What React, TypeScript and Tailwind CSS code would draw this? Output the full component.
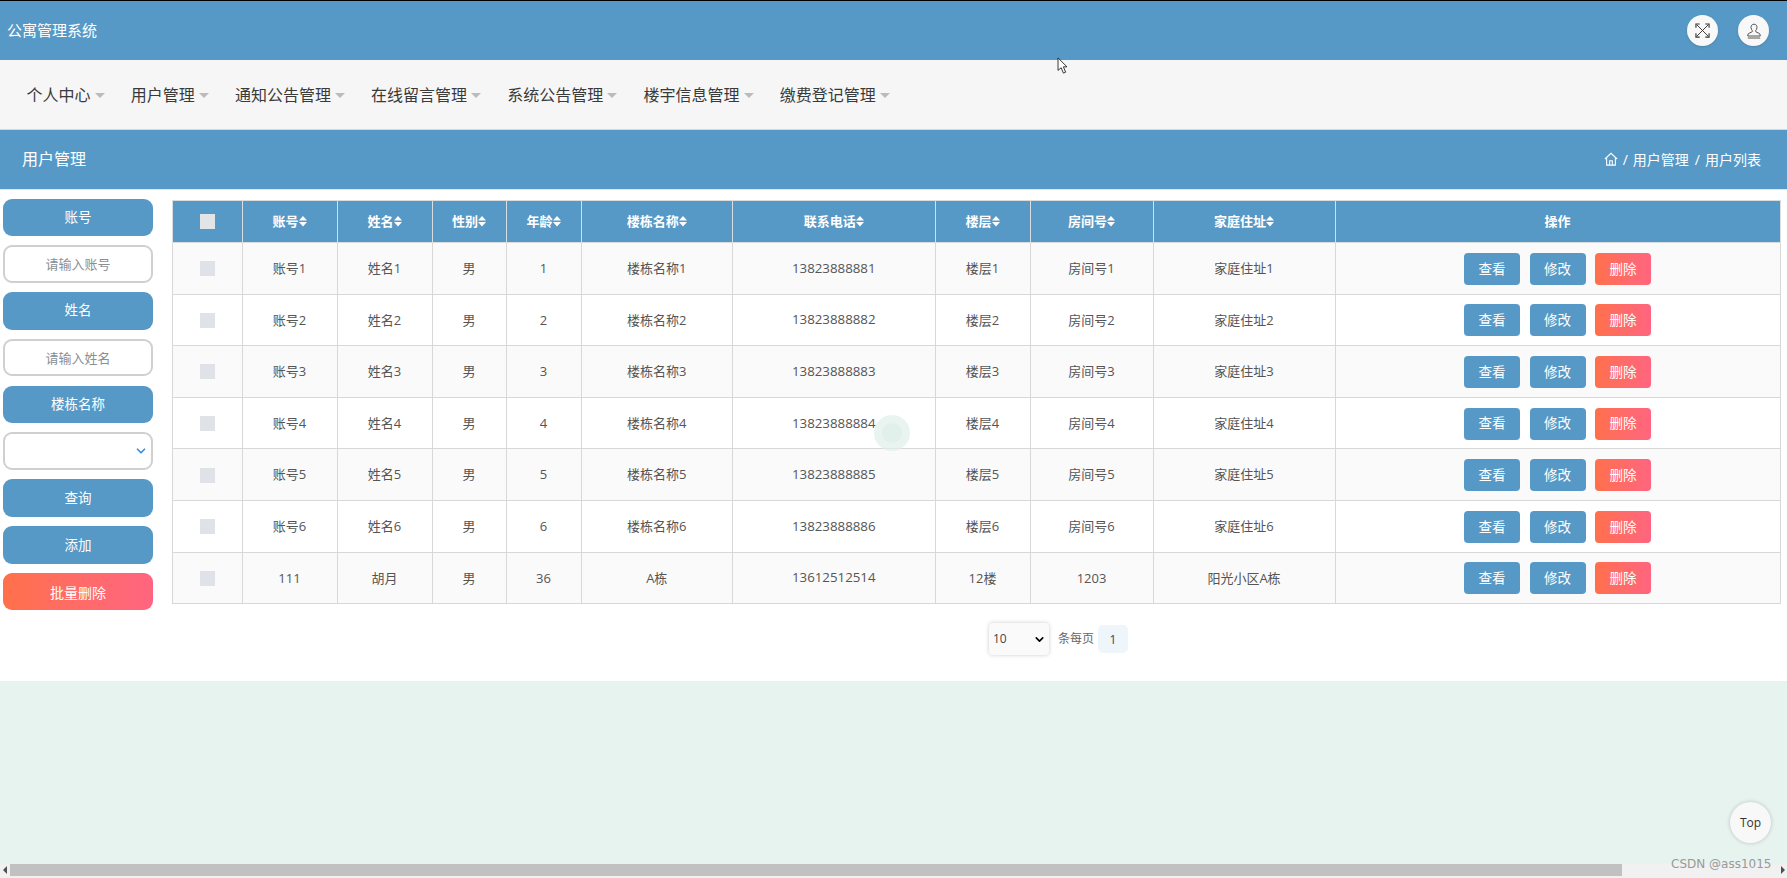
import { ChevronDown } from "lucide-react";

type Row = {
  account: string;
  name: string;
  age: string;
  building: string;
  phone: string;
  floor: string;
  room: string;
  address: string;
};

const rows: Row[] = [1, 2, 3, 4, 5, 6].map((n) => ({
  account: `账号${n}`,
  name: `姓名${n}`,
  age: `${n}`,
  building: `楼栋名称${n}`,
  phone: `1382388888${n}`,
  floor: `楼层${n}`,
  room: `房间号${n}`,
  address: `家庭住址${n}`,
}));

rows.push({
  account: "111",
  name: "胡月",
  age: "36",
  building: "A栋",
  phone: "13612512514",
  floor: "12楼",
  room: "1203",
  address: "阳光小区A栋",
});

const navItems = ["个人中心", "用户管理", "通知公告管理", "在线留言管理", "系统公告管理", "楼宇信息管理", "缴费登记管理"];
const columns = ["账号", "姓名", "性别", "年龄", "楼栋名称", "联系电话", "楼层", "房间号", "家庭住址"];
const colWidths = ["w-[69.5px]", "w-[95px]", "w-[95px]", "w-[74px]", "w-[75px]", "w-[151.5px]", "w-[202.5px]", "w-[95px]", "w-[123px]", "w-[182px]", "w-[445px]"];

function SortIcon() {
  return (
    <svg viewBox="0 0 8 11" className="inline-block h-[11px] w-[8px] fill-white align-[-1px]">
      <polygon points="4,0 8,4.5 0,4.5" />
      <polygon points="0,6 8,6 4,10.5" />
    </svg>
  );
}

function ExpandIcon() {
  return (
    <svg viewBox="0 0 16 16" className="h-[15px] w-[15px] fill-none stroke-[#333]" strokeWidth="1">
      <path d="M2 2l12 12M14 2L2 14" />
      <path d="M1 5V1h4M11 1h4v4M15 11v4h-4M5 15H1v-4" strokeWidth="1.2" />
    </svg>
  );
}

function UserIcon() {
  return (
    <svg viewBox="0 0 16 16" className="h-[16px] w-[16px] fill-none stroke-[#444]" strokeWidth="0.9">
      <path d="M8 1.2c-2 0-3 1.500-3 3.200 0 1.300.6 2.400 1.300 3.100.4.4.3 1-.2 1.300L3 10.300c-.8.4-1.200 1-1.200 1.700v1h12.400v-1c0-.7-.4-1.300-1.200-1.700L9.900 8.800c-.5-.3-.6-.9-.2-1.300.7-.7 1.300-1.800 1.300-3.100 0-1.700-1-3.200-3-3.200z" />
      <path d="M1.800 15h12.400" />
    </svg>
  );
}

function HomeIcon() {
  return (
    <svg viewBox="0 0 16 16" className="h-[14px] w-[14px] fill-none stroke-white" strokeWidth="1.200">
      <path d="M1 8l7-6.500L15 8M3 6.500V15h10V6.500" />
      <path d="M6.500 15v-5h3v5" />
    </svg>
  );
}

function Caret() {
  return <span className="ml-1 inline-block h-0 w-0 border-x-[5px] border-t-[5px] border-x-transparent border-t-[#bbbbbb] align-[3px]" />;
}

function LabelBox({ children, down }: { children: string; down?: boolean }) {
  return (
    <div className={`flex h-[37.5px] items-center justify-center rounded-[9px] bg-[#5799c6] text-[13.5px] text-white ${down ? "pt-[1px]" : "pb-[1px]"}`}>
      {children}
    </div>
  );
}

function FilterInput({ placeholder }: { placeholder: string }) {
  return (
    <input
      placeholder={placeholder}
      className="h-[37.5px] w-full rounded-[9px] border-2 border-[#d0d0d0] bg-white text-center text-[13px] outline-none placeholder:text-[#8a8f94]"
    />
  );
}

export default function App() {
  return (
    <div className="relative flex h-[878px] w-[1787px] flex-col overflow-hidden bg-white font-['Open_Sans','Noto_Sans_CJK_SC',sans-serif] text-[#555]">
      {/* Top bar */}
      <div className="flex h-[60px] shrink-0 items-center justify-between border-t border-black bg-[#5799c6] pl-[7px] pr-[18px]">
        <div className="text-[15px] text-white">公寓管理系统</div>
        <div className="flex gap-[20px]">
          <div className="flex h-[31px] w-[31px] items-center justify-center rounded-full bg-[#f8f8f8] shadow-sm">
            <ExpandIcon />
          </div>
          <div className="flex h-[31px] w-[31px] items-center justify-center rounded-full bg-[#f8f8f8] shadow-sm">
            <UserIcon />
          </div>
        </div>
      </div>

      {/* Nav */}
      <div className="flex h-[70px] shrink-0 items-center gap-[26.2px] border-b border-[#d4d8da] bg-[#f6f6f6] pl-[26.500px] text-[16px] text-[#3a3a3a]">
        {navItems.map((item) => (
          <div key={item} className="whitespace-nowrap">
            {item}
            <Caret />
          </div>
        ))}
      </div>

      {/* Breadcrumb */}
      <div className="flex h-[59.500px] shrink-0 items-center justify-between border-b border-[#dfe6ea] bg-[#5799c6] pl-[22px] pr-[26px] text-white">
        <div className="text-[16px]">用户管理</div>
        <div className="flex items-center gap-[5px] text-[14px]">
          <HomeIcon />
          <span>/</span>
          <span>用户管理</span>
          <span className="ml-[1px]">/</span>
          <span>用户列表</span>
        </div>
      </div>

      {/* Content */}
      <div className="flex h-[491px] shrink-0 gap-[19px] bg-white pl-[3px] pr-[7px] pt-[9px]">
        <div className="flex w-[150px] shrink-0 flex-col gap-[9.300px]">
          <LabelBox>账号</LabelBox>
          <FilterInput placeholder="请输入账号" />
          <LabelBox>姓名</LabelBox>
          <FilterInput placeholder="请输入姓名" />
          <LabelBox>楼栋名称</LabelBox>
          <div className="flex h-[37.500px] items-center justify-end rounded-[9px] border-2 border-[#d0d0d0] bg-white pr-[3px]">
            <ChevronDown className="h-[14px] w-[14px] text-[#3b8fe0]" strokeWidth={3} />
          </div>
          <LabelBox down>查询</LabelBox>
          <LabelBox down>添加</LabelBox>
          <div className="flex h-[37.500px] items-center justify-center rounded-[9px] bg-linear-to-r from-[#ff7049] to-[#ff6580] pt-[2px] text-[14px] text-white">
            批量删除
          </div>
        </div>

        <div className="flex min-w-0 flex-1 flex-col pt-[1.500px]">
          <table className="w-[1608px] table-fixed border-collapse text-center text-[13px]">
            <colgroup>
              {colWidths.map((w, i) => (
                <col key={i} className={w} />
              ))}
            </colgroup>
            <thead>
              <tr className="h-[42px] bg-[#5799c6] font-bold text-white">
                <th className="border border-[#d8dde0]">
                  <span className="mx-auto block h-[15px] w-[15px] bg-[#e2e5e8]" />
                </th>
                {columns.map((c) => (
                  <th key={c} className="border border-[#d8dde0] font-bold">
                    {c}
                    <SortIcon />
                  </th>
                ))}
                <th className="border border-[#d8dde0] font-bold">操作</th>
              </tr>
            </thead>
            <tbody className="[&_td]:pt-[1px]">
              {rows.map((r, i) => (
                <tr key={r.account} className={`h-[51.600px] ${i % 2 === 0 ? "bg-[#fafafa]" : "bg-white"}`}>
                  <td className="border border-[#d8d8d8]">
                    <span className="mx-auto block h-[15px] w-[15px] bg-[#dfe3e8]" />
                  </td>
                  <td className="border border-[#d8d8d8]">{r.account}</td>
                  <td className="border border-[#d8d8d8]">{r.name}</td>
                  <td className="border border-[#d8d8d8]">男</td>
                  <td className="border border-[#d8d8d8]">{r.age}</td>
                  <td className="border border-[#d8d8d8]">{r.building}</td>
                  <td className="border border-[#d8d8d8] text-[13.300px]">{r.phone}</td>
                  <td className="border border-[#d8d8d8]">{r.floor}</td>
                  <td className="border border-[#d8d8d8]">{r.room}</td>
                  <td className="border border-[#d8d8d8]">{r.address}</td>
                  <td className="border border-[#d8d8d8]">
                    <div className="flex justify-center gap-[9.500px] text-[13.500px] text-white">
                      <div className="flex h-[32px] w-[56px] items-center justify-center rounded-[4px] bg-[#5799c6]">查看</div>
                      <div className="flex h-[32px] w-[56px] items-center justify-center rounded-[4px] bg-[#5799c6]">修改</div>
                      <div className="flex h-[32px] w-[56px] items-center justify-center rounded-[4px] bg-linear-to-r from-[#ff7049] to-[#ff6580]">删除</div>
                    </div>
                  </td>
                </tr>
              ))}
            </tbody>
          </table>

          {/* Pagination */}
          <div className="ml-[817px] mt-[19px] flex items-center">
            <div className="flex h-[32px] w-[60px] items-center justify-between rounded-[4px] bg-[#fafafa] pl-1 pr-[3px] text-[12px] text-[#444] shadow-[0_0_4px_rgba(0,0,0,0.2)]">
              10
              <ChevronDown className="h-[13px] w-[13px] text-black" strokeWidth={3} />
            </div>
            <div className="ml-[9px] text-[12px] text-[#666]">条每页</div>
            <div className="ml-[4px] flex h-[28px] w-[30px] items-center justify-center rounded-[5px] bg-[#eef5fb] pt-[1px] text-[12px] text-[#444]">1</div>
          </div>
        </div>
      </div>

      {/* Empty page area */}
      <div className="flex-1 bg-[#e7f3ef]" />

      {/* Horizontal page scrollbar */}
      <div className="flex h-[14px] shrink-0 items-center bg-[#f1f1f1] pb-[2px]">
        <div className="flex h-[12px] w-[10px] items-center justify-center">
          <span className="h-0 w-0 border-y-[4px] border-r-[4px] border-y-transparent border-r-[#505050]" />
        </div>
        <div className="h-[12px] w-[1612px] bg-[#c1c1c1]" />
        <div className="flex flex-1 justify-end pr-[2px]">
          <span className="h-0 w-0 border-y-[4px] border-l-[4px] border-y-transparent border-l-[#505050]" />
        </div>
      </div>

      {/* Overlays */}
      <div className="absolute left-[1730px] top-[802px] flex h-[41px] w-[41px] items-center justify-center rounded-full bg-[#f8f8f8] text-[12px] text-[#333] shadow-[0_0_4px_rgba(0,0,0,0.2)]">
        Top
      </div>
      <div className="absolute left-[1671px] top-[855px] font-['DejaVu_Sans',sans-serif] text-[12px] text-[#999]">CSDN @ass1015</div>
      <div className="absolute left-[874px] top-[415px] flex h-[36px] w-[36px] items-center justify-center rounded-full bg-[#dff0ea]/70">
        <div className="h-[20px] w-[20px] rounded-full bg-[#cfe8df]/30" />
      </div>
      <svg viewBox="0 0 12 19" className="absolute left-[1057px] top-[57px] h-[17px] w-[11px]">
        <path d="M1 1v14l3.500-3 2.500 6 2.500-1-2.500-6H11z" fill="#fff" stroke="#222" strokeWidth="1" />
      </svg>
    </div>
  );
}
